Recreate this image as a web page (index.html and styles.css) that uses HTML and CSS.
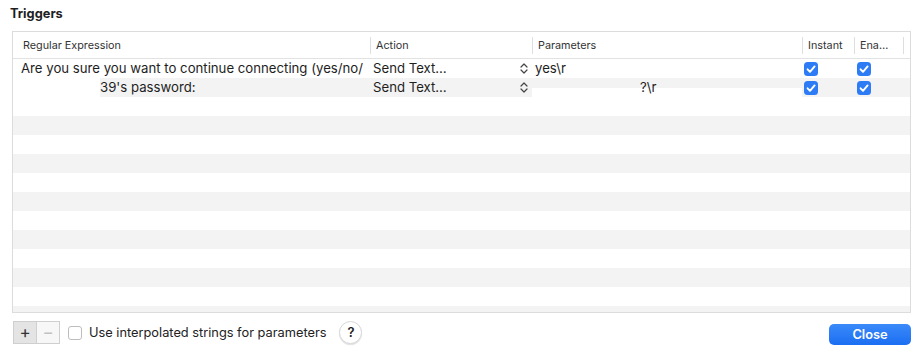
FILE: index.html
```html
<!DOCTYPE html>
<html>
<head>
<meta charset="utf-8">
<link rel="stylesheet" href="styles.css">
</head>
<body>
<div class="win">
  <div class="title">Triggers</div>
  <div class="table">
    <div class="head">
      <div class="hc c1">Regular Expression</div>
      <div class="hc c2">Action</div>
      <div class="hc c3">Parameters</div>
      <div class="hc c4">Instant</div>
      <div class="hc c5">Ena…</div>
      <div class="hc c6"></div>
    </div>
    <div class="body">
      <div class="row">
        <div class="cell c1">Are you sure you want to continue connecting (yes/no/</div>
        <div class="cell c2"><span>Send Text…</span><svg class="updown" width="8" height="11" viewBox="0 0 8 11"><path d="M1 4 L4 1 L7 4 M1 7 L4 10 L7 7" fill="none" stroke="#444" stroke-width="1.2" stroke-linecap="round" stroke-linejoin="round"/></svg></div>
        <div class="cell c3">yes\r</div>
        <div class="cell c4"><svg class="cb" width="14" height="14" viewBox="0 0 14 14"><rect width="14" height="14" rx="3.5" fill="#2d7cf6"/><path d="M3.6 7.3 L6 9.8 L10.6 4.4" fill="none" stroke="#fff" stroke-width="1.9" stroke-linecap="round" stroke-linejoin="round"/></svg></div>
        <div class="cell c5"><svg class="cb" width="14" height="14" viewBox="0 0 14 14"><rect width="14" height="14" rx="3.5" fill="#2d7cf6"/><path d="M3.6 7.3 L6 9.8 L10.6 4.4" fill="none" stroke="#fff" stroke-width="1.9" stroke-linecap="round" stroke-linejoin="round"/></svg></div>
        <div class="cell c6"></div>
      </div>
      <div class="row alt">
        <div class="cell c1 redact-l">39's password:</div>
        <div class="cell c2"><span>Send Text…</span><svg class="updown" width="8" height="11" viewBox="0 0 8 11"><path d="M1 4 L4 1 L7 4 M1 7 L4 10 L7 7" fill="none" stroke="#444" stroke-width="1.2" stroke-linecap="round" stroke-linejoin="round"/></svg></div>
        <div class="cell c3 redact-p">?\r</div>
        <div class="cell c4"><svg class="cb" width="14" height="14" viewBox="0 0 14 14"><rect width="14" height="14" rx="3.5" fill="#2d7cf6"/><path d="M3.6 7.3 L6 9.8 L10.6 4.4" fill="none" stroke="#fff" stroke-width="1.9" stroke-linecap="round" stroke-linejoin="round"/></svg></div>
        <div class="cell c5"><svg class="cb" width="14" height="14" viewBox="0 0 14 14"><rect width="14" height="14" rx="3.5" fill="#2d7cf6"/><path d="M3.6 7.3 L6 9.8 L10.6 4.4" fill="none" stroke="#fff" stroke-width="1.9" stroke-linecap="round" stroke-linejoin="round"/></svg></div>
        <div class="cell c6"></div>
      </div>
      <div class="row"></div>
      <div class="row alt"></div>
      <div class="row"></div>
      <div class="row alt"></div>
      <div class="row"></div>
      <div class="row alt"></div>
      <div class="row"></div>
      <div class="row alt"></div>
      <div class="row"></div>
      <div class="row alt"></div>
      <div class="row"></div>
      <div class="row alt"></div>
    </div>
  </div>
  <div class="footer">
    <div class="seg">
      <div class="seg-btn plus">+</div>
      <div class="seg-btn minus">−</div>
    </div>
    <label class="check"><span class="box"></span>Use interpolated strings for parameters</label>
    <div class="help">?</div>
    <div class="spacer"></div>
    <div class="close">Close</div>
  </div>
</div>
</body>
</html>
```

FILE: styles.css
```css
html, body {
  margin: 0;
  padding: 0;
  background: #ffffff;
}
body {
  font-family: Inter, "Noto Sans", sans-serif;
  color: #222;
  width: 912px;
  height: 363px;
  overflow: hidden;
}
.win {
  display: flex;
  flex-direction: column;
}
.title {
  font-weight: 700;
  font-size: 12.8px;
  color: #1f1f1f;
  height: 31px;
  line-height: 28px;
  padding-left: 10px;
}
.table {
  margin-left: 12px;
  width: 897px;
  height: 280px;
  border: 1px solid #dcdcdc;
  overflow: hidden;
  background: #fff;
}
.head {
  display: grid;
  grid-template-columns: 357px 162px 270px 52px 49px 7px;
  height: 26px;
  border-bottom: 1px solid #e2e2e2;
  align-items: center;
}
.hc {
  font-size: 10.8px;
  color: #333;
  padding-left: 9px;
  height: 17px;
  line-height: 17px;
  border-left: 1px solid #dedede;
  white-space: nowrap;
  overflow: hidden;
}
.hc.c1 { border-left: none; padding-left: 10px; }
.hc.c2, .hc.c3, .hc.c4, .hc.c5 { padding-left: 5px; }
.row {
  display: grid;
  grid-template-columns: 357px 162px 270px 52px 49px 7px;
  height: 19px;
}
.row.alt { background: #f3f3f3; }
.cell {
  font-size: 13.2px;
  line-height: 19px;
  white-space: nowrap;
  overflow: hidden;
  color: #1e1e1e;
}
.cell.c1 { padding-left: 8px; }
.cell.c2 {
  display: flex;
  align-items: center;
  justify-content: space-between;
  padding-left: 3px;
  padding-right: 4px;
}
.updown { display: block; }
.cell.c3 { padding-left: 3px; }
.cell.c4, .cell.c5 {
  display: flex;
  align-items: center;
  padding-left: 2px;
}
.cell.c5 { padding-left: 3px; }
.cb { display: block; }
.redact-l.c1 {
  padding-left: 87px;
  background: linear-gradient(to right, #fff 0 87px, #f3f3f3 87px);
}
.redact-p.c3 {
  padding-left: 108px;
  background: linear-gradient(#f3f3f3 0 10px, #fff 10px 19px);
}
.footer {
  display: flex;
  align-items: center;
  margin-top: 8px;
  padding-left: 13px;
  padding-right: 1px;
  height: 23px;
}
.seg {
  display: flex;
  border: 1px solid #cfcfcf;
  height: 21px;
}
.seg-btn {
  width: 22px;
  height: 21px;
  text-align: center;
  line-height: 20px;
  font-size: 17px;
}
.seg-btn.plus {
  background: #e4e4e4;
  color: #333;
  border-right: 1px solid #d0d0d0;
}
.seg-btn.minus {
  background: #f7f7f7;
  color: #c2c2c2;
}
.check {
  display: flex;
  align-items: center;
  margin-left: 8px;
  font-size: 12.8px;
  color: #222;
}
.box {
  width: 12px;
  height: 12px;
  border: 1px solid #bdbdbd;
  border-radius: 3px;
  background: #fff;
  margin-right: 7px;
}
.help {
  margin-left: 13px;
  width: 21px;
  height: 21px;
  border-radius: 50%;
  border: 1px solid #d8d8d8;
  box-shadow: 0 1px 1px rgba(0,0,0,0.12);
  text-align: center;
  line-height: 21px;
  font-size: 13px;
  font-weight: 600;
  color: #222;
  background: #fff;
}
.spacer { flex: 1; }
.close {
  width: 82px;
  height: 21px;
  border-radius: 5px;
  background: linear-gradient(#3a8af9, #1c6ef2);
  color: #fff;
  font-size: 12.8px;
  font-weight: 600;
  text-align: center;
  line-height: 21px;
  margin-top: 3px;
}
```
